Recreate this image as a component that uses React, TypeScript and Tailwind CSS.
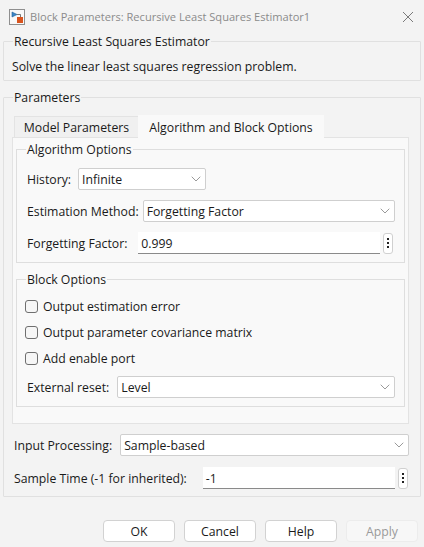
import { ChevronDown } from "lucide-react";

const font = { fontFamily: '"Open Sans", "Noto Sans", sans-serif' };

// Open Sans sits about 1px higher than the original UI font
const label = "whitespace-nowrap pt-[2px]";
const legend = "h-[16px] leading-[18px] whitespace-nowrap";

function Select({ value, className }: { value: string; className: string }) {
  return (
    <div className={`flex h-[22px] shrink-0 items-center justify-between rounded-[2px] border border-[#cfcfcf] bg-white pl-[3px] pr-[1px] ${className}`}>
      <span className={label}>{value}</span>
      <ChevronDown size={16} strokeWidth={1} className="text-[#666]" />
    </div>
  );
}

function Field({ value, className }: { value: string; className: string }) {
  return (
    <div className={`flex h-[22px] shrink-0 items-center border-b border-[#8a8a8a] bg-white pl-[3px] ${className}`}>
      <span className={label}>{value}</span>
    </div>
  );
}

function Dots() {
  return (
    <div className="flex h-[21px] w-[10px] shrink-0 flex-col items-center justify-center gap-[2px] rounded-[3px] border border-[#d0d0d0] bg-white">
      <span className="h-[2px] w-[2px] bg-[#222]" />
      <span className="h-[2px] w-[2px] bg-[#222]" />
      <span className="h-[2px] w-[2px] bg-[#222]" />
    </div>
  );
}

function Check({ text }: { text: string }) {
  return (
    <div className="flex h-[14px] items-center gap-[5px]">
      <span className="h-[13px] w-[13px] rounded-[3px] border border-[#6f6f6f] bg-[#f6f6f6]" />
      <span className={label}>{text}</span>
    </div>
  );
}

function Btn({ text, off }: { text: string; off?: boolean }) {
  return (
    <div
      className={`flex h-[22px] w-[72px] items-center justify-center rounded-[4px] border ${
        off ? "border-[#ececec] bg-[#f7f7f7] text-[#9a9a9a]" : "border-[#d2d2d2] bg-white text-[#1a1a1a]"
      }`}
    >
      <span className={label}>{text}</span>
    </div>
  );
}

export default function App() {
  return (
    <div style={font} className="h-[547px] w-[424px] overflow-hidden bg-[#f3f3f3] text-[12.25px] leading-[16px] text-[#1a1a1a]">
      {/* Title bar */}
      <div className="flex h-[33px] items-center justify-between pl-[9px] pr-[10px]">
        <div className="flex items-center gap-[5px] text-[11.1px] text-[#8b8b8b]">
          <svg width="16" height="16" viewBox="0 0 16 16">
            <rect x="0.5" y="0.5" width="15" height="15" fill="#f8f8f8" stroke="#8f8f8f" />
            <path d="M3 3 L8 5.5 L3 8 Z" fill="#3d86c6" stroke="#1f5f99" strokeWidth="0.6" />
            <path d="M8 5.5 H11.5 V8" fill="none" stroke="#555" strokeWidth="0.8" />
            <rect x="8" y="8" width="6" height="6" fill="#d9541e" />
          </svg>
          <span>Block Parameters: Recursive Least Squares Estimator1</span>
        </div>
        <svg width="12" height="12" viewBox="0 0 12 12" stroke="#7a7a7a" strokeWidth="1">
          <path d="M1 1 L11 11 M11 1 L1 11" />
        </svg>
      </div>

      {/* Description */}
      <fieldset className="mx-[3px] h-[48px] rounded-[1px] border border-[#e0e0e0] px-[9px]">
        <legend className={`px-[1px] ${legend}`}>Recursive Least Squares Estimator</legend>
        <p className="mt-[10px] -ml-[1px]">Solve the linear least squares regression problem.</p>
      </fieldset>

      {/* Parameters */}
      <fieldset className="mx-[3px] mt-[8px] h-[408px] rounded-[1px] border border-[#e0e0e0] px-[8px]">
        <legend className={`ml-[1px] px-[1px] ${legend}`}>Parameters</legend>

        <div className="mt-[10px] flex items-end pl-[2px]">
          <div className="flex h-[21px] w-[125px] items-center justify-center border border-b-0 border-[#e3e3e3] bg-[#f0f0f0]">
            <span className={label}>Model Parameters</span>
          </div>
          <div className="z-10 -mb-px -ml-px flex h-[23px] w-[186px] items-center justify-center bg-[#f9f9f9]">
            <span className={label}>Algorithm and Block Options</span>
          </div>
        </div>

        <div className="mr-[3px] h-[287px] border border-[#e3e3e3] bg-[#f9f9f9] px-[3px] pt-[3px]">
          <fieldset className="h-[122px] border border-[#dedede] pl-[10px] pr-[8px]">
            <legend className={`-ml-[1px] px-[1px] ${legend}`}>Algorithm Options</legend>
            <div className="mt-[11px] flex items-center gap-[7px]">
              <span className={label}>History:</span>
              <Select value="Infinite" className="w-[128px]" />
            </div>
            <div className="mt-[10px] flex items-center gap-[4px]">
              <span className={label}>Estimation Method:</span>
              <Select value="Forgetting Factor" className="w-[252px]" />
            </div>
            <div className="mt-[10px] flex items-center gap-[3px]">
              <span className={`mr-[8px] ${label}`}>Forgetting Factor:</span>
              <Field value="0.999" className="w-[242px]" />
              <Dots />
            </div>
          </fieldset>

          <fieldset className="mt-[8px] h-[136px] border border-[#dedede] px-[8px]">
            <legend className={`ml-[1px] px-[1px] ${legend}`}>Block Options</legend>
            <div className="mt-[12px] flex flex-col gap-[12px]">
              <Check text="Output estimation error" />
              <Check text="Output parameter covariance matrix" />
              <Check text="Add enable port" />
            </div>
            <div className="mt-[11px] flex items-center gap-[8px] pl-[2px]">
              <span className={label}>External reset:</span>
              <Select value="Level" className="w-[278px]" />
            </div>
          </fieldset>
        </div>

        <div className="mt-[10px] flex items-center gap-[8px] pl-[2px]">
          <span className={label}>Input Processing:</span>
          <Select value="Sample-based" className="w-[289px]" />
        </div>
        <div className="mt-[11px] flex items-center gap-[3px] pl-[2px]">
          <span className={`mr-[13px] ${label}`}>Sample Time (-1 for inherited):</span>
          <Field value="-1" className="w-[192px]" />
          <Dots />
        </div>
      </fieldset>

      {/* Buttons */}
      <div className="mt-[23px] flex justify-end gap-[9px] pr-[6px]">
        <Btn text="OK" />
        <Btn text="Cancel" />
        <Btn text="Help" />
        <Btn text="Apply" off />
      </div>
    </div>
  );
}
